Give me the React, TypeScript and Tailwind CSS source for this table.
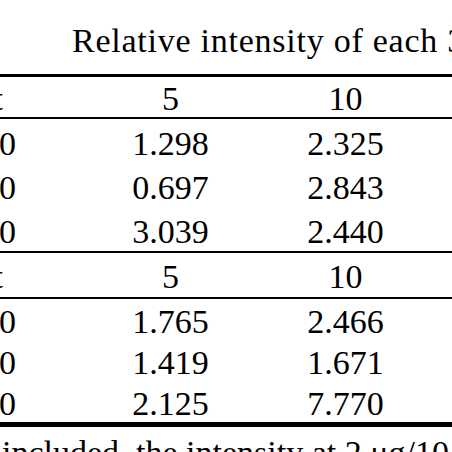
const groups = [
  { rows: [["1.298", "2.325"], ["0.697", "2.843"], ["3.039", "2.440"]] },
  { rows: [["1.765", "2.466"], ["1.419", "1.671"], ["2.125", "7.770"]] },
];

const firstCol = ["10", "20", "50"];

function HeaderRow({ h }: { h: string }) {
  return (
    <div className={`grid grid-cols-[83px_175px_175px_175px] ${h}`}>
      <div className="flex justify-end w-[3px] whitespace-nowrap">t</div>
      <div className="text-center">5</div>
      <div className="text-center">10</div>
      <div className="text-center">20</div>
    </div>
  );
}

function DataRow({ first, a, b, h }: { first: string; a: string; b: string; h: string }) {
  return (
    <div className={`grid grid-cols-[83px_175px_175px_175px] ${h}`}>
      <div className="flex justify-end w-[16px] whitespace-nowrap">{first}</div>
      <div className="text-center">{a}</div>
      <div className="text-center">{b}</div>
      <div className="text-center"></div>
    </div>
  );
}

export default function App() {
  return (
    <div
      className="w-[452px] h-[452px] overflow-hidden bg-white text-black text-[34px]"
      style={{ fontFamily: '"Liberation Serif", "Times New Roman", serif' }}
    >
      <div className="h-[74px] pt-[15px] pl-[72px] whitespace-nowrap leading-normal tracking-[0.75px]">
        Relative intensity of each 3
      </div>
      <div className="border-t-[3px] border-black" />
      <HeaderRow h="h-[40px] leading-[40px] pt-[2px]" />
      <div className="border-t-2 border-black" />
      {groups[0].rows.map(([a, b], i) => (
        <DataRow key={a} first={firstCol[i]} a={a} b={b} h="h-[44px] leading-[44px] pt-[3px]" />
      ))}
      <div className="border-t-2 border-black" />
      <HeaderRow h="h-[44px] leading-[44px] pt-[2px]" />
      <div className="border-t-2 border-black" />
      {groups[1].rows.map(([a, b], i) => (
        <DataRow key={a} first={firstCol[i]} a={a} b={b} h="h-[41px] leading-[41px] pt-[2px]" />
      ))}
      <div className="border-t-[5px] border-black" />
      <div className="pl-[2px] whitespace-nowrap leading-normal">
        included, the intensity at 2 μg/10 mL
      </div>
    </div>
  );
}
